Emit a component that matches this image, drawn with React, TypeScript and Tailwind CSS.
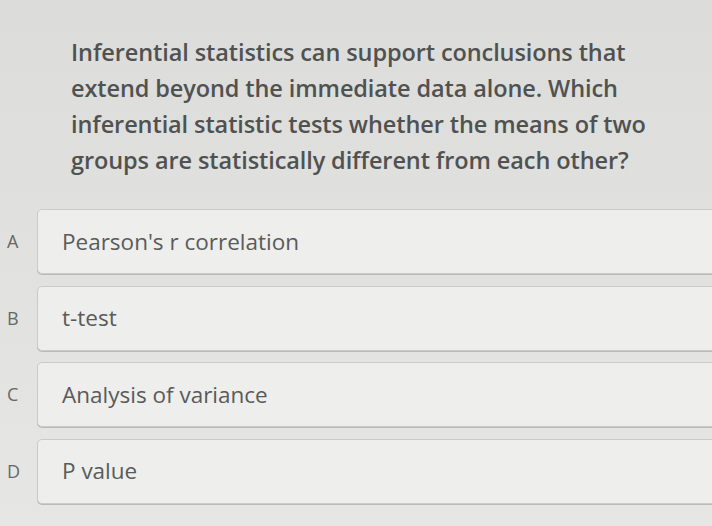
const OPTIONS = [
  { letter: "A", text: "Pearson's r correlation" },
  { letter: "B", text: "t-test" },
  { letter: "C", text: "Analysis of variance" },
  { letter: "D", text: "P value" },
];

const LINES = [
  "Inferential statistics can support conclusions that",
  "extend beyond the immediate data alone. Which",
  "inferential statistic tests whether the means of two",
  "groups are statistically different from each other?",
];

export default function App() {
  return (
    <div
      className="h-[526px] w-[712px] overflow-hidden bg-gradient-to-b from-[#dcdcda] to-[#e6e7e5] text-[#505251]"
      style={{ fontFamily: "'Open Sans', 'Noto Sans', sans-serif" }}
    >
      <div className="pl-[71px] pt-[34px]">
        <p className="whitespace-nowrap text-[23.5px] font-semibold leading-[36px] tracking-[-0.1px]">
          {LINES.map((l) => (
            <span key={l} className="block">
              {l}
            </span>
          ))}
        </p>
      </div>

      <ul className="mt-[31px] flex flex-col gap-[11.5px]">
        {OPTIONS.map((o) => (
          <li key={o.letter} className="flex items-center">
            <span className="w-[37px] pl-[7px] text-[18px] text-[#666867]">{o.letter}</span>
            <div className="-mr-4 flex h-[65px] flex-1 items-center rounded-[5px] border border-[#c9cbca] bg-[#eeeeec] pl-[24px] shadow-[0_1px_0_#b9bbba]">
              <span className="text-[22.5px] font-medium text-[#595b5a]">{o.text}</span>
            </div>
          </li>
        ))}
      </ul>
    </div>
  );
}
